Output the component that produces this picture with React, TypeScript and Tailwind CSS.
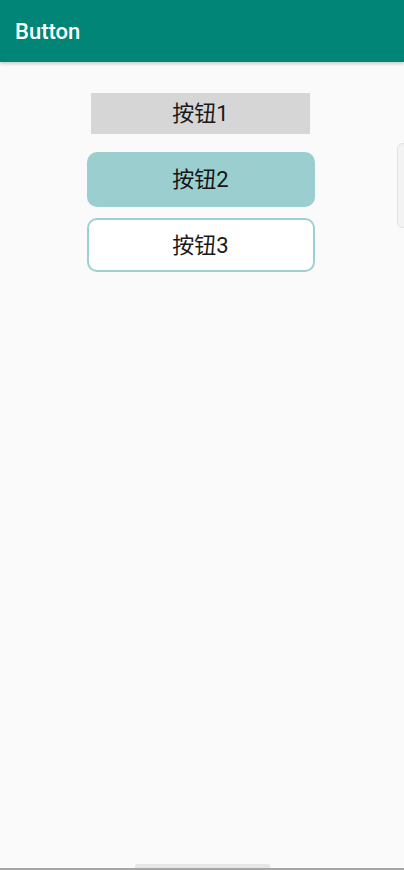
const font = "font-['Roboto','Noto_Sans_CJK_SC',sans-serif]";

function ActionBar({ title }: { title: string }) {
  return (
    <header className="relative z-10 flex h-[62px] items-center bg-[#008577] px-[15px] shadow-[0_2px_3px_rgba(0,0,0,0.18)]">
      <h1 className="text-[22px] font-medium text-white">{title}</h1>
    </header>
  );
}

export default function App() {
  return (
    <div className={`relative flex h-[870px] w-[404px] flex-col overflow-hidden bg-[#fafafa] ${font}`}>
      <ActionBar title="Button" />

      <main className="flex flex-1 flex-col items-center pr-[3px] pt-[31px]">
        {/* default flat button */}
        <button
          type="button"
          className="flex h-[41px] w-[219px] items-center justify-center bg-[#d6d6d6] text-[22px] text-[#1a1a1a]"
        >
          按钮1
        </button>

        {/* filled rounded button */}
        <button
          type="button"
          className="mt-[18px] flex h-[55px] w-[228px] items-center justify-center rounded-[10px] bg-[#9bcfcf] text-[22px] text-[#141414]"
        >
          按钮2
        </button>

        {/* outlined rounded button */}
        <button
          type="button"
          className="mt-[11px] flex h-[54px] w-[228px] items-center justify-center rounded-[10px] border-2 border-[#9dd0d1] bg-white text-[22px] text-[#1a1a1a]"
        >
          按钮3
        </button>
      </main>

      {/* edge of a side panel peeking in on the right */}
      <div className="absolute right-[-8px] top-[143px] h-[85px] w-[15px] rounded-[6px] border border-[#e2e2e2] bg-[#f3f3f3]" />

      {/* bottom navigation handle */}
      <div className="flex h-[6px] flex-col justify-end">
        <div className="mx-auto h-[4px] w-[135px] rounded-t-[2px] bg-[#e6e6e6]" />
        <div className="h-[2px] bg-[#a6a6a6]" />
      </div>
    </div>
  );
}
